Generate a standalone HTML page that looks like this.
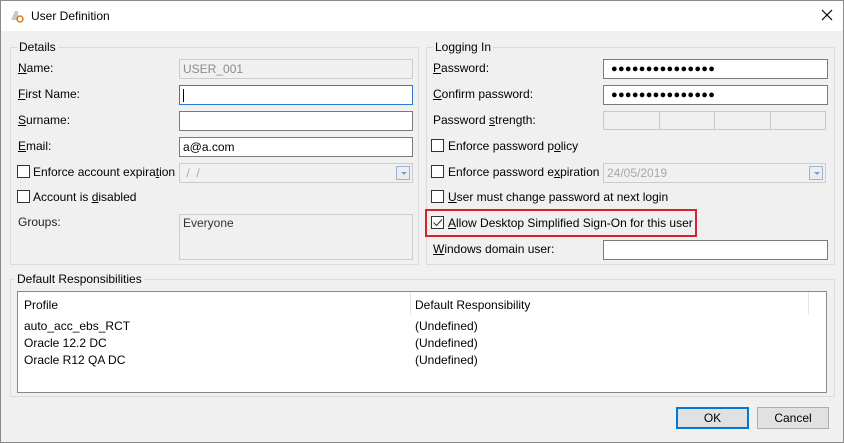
<!DOCTYPE html>
<html><head><style>
*{box-sizing:border-box;margin:0;padding:0}
body{width:844px;height:443px;overflow:hidden;background:#f0f0f0;font-family:"Liberation Sans",sans-serif;font-size:12px;color:#000;position:relative}
.win{position:absolute;left:0;top:0;width:844px;height:443px;border:1px solid #8a8a8a}
.title{position:absolute;left:1px;top:1px;width:842px;height:30px;background:#fff}
.a{position:absolute;white-space:nowrap}
.grp{position:absolute;border:1px solid #dcdcdc}
.lg{position:absolute;background:#f0f0f0;padding:0 2px;top:-8px;left:6px;line-height:14px}
.in{position:absolute;background:#fff;border:1px solid #7a7a7a;height:20px;padding:2px 3px;line-height:14px}
.dis{background:#f0f0f0;border-color:#cccccc;color:#8d8d8d}
.cb{position:absolute;width:13px;height:13px;border:1px solid #333;background:#fff}
.dd{position:absolute;right:2px;top:2px;width:14px;height:14px;border:1px solid #9fb4cc;background:#e9eef5}
.dd:after{content:"";position:absolute;left:4px;top:5px;border-left:3px solid transparent;border-right:3px solid transparent;border-top:3px solid #8a9bb0}
.dots{font-size:11px;font-weight:bold;line-height:12px;letter-spacing:0.3px;padding-left:7px}
.btn{position:absolute;height:22px;border:1px solid #adadad;background:#e1e1e1;text-align:center;line-height:20px}
u{text-decoration:underline}
</style></head><body>
<div class="win"></div>
<div class="title"></div>
<svg class="a" style="left:9px;top:9px" width="16" height="14" viewBox="0 0 16 14"><path d="M2 11 L6 2 L9 2 L9 11 Z" fill="#c8c8c8"/><circle cx="11" cy="10" r="3" fill="none" stroke="#e07b20" stroke-width="1.5"/></svg>
<div class="a" style="left:31px;top:9px;font-size:12px">User Definition</div>
<svg class="a" style="left:821px;top:9px" width="12" height="12"><path d="M1 1L11 11M11 1L1 11" stroke="#000" stroke-width="1.2"/></svg>

<div class="grp" style="left:10px;top:47px;width:409px;height:218px"><div class="lg">Details</div></div>
<div class="grp" style="left:426px;top:47px;width:409px;height:218px"><div class="lg">Logging In</div></div>
<div class="grp" style="left:10px;top:279px;width:825px;height:118px"><div class="lg" style="left:4px">Default Responsibilities</div></div>

<div class="a" style="left:18px;top:61px"><u>N</u>ame:</div>
<div class="in dis" style="left:179px;top:59px;width:234px">USER_001</div>
<div class="a" style="left:18px;top:87px"><u>F</u>irst Name:</div>
<div class="in" style="left:179px;top:85px;width:234px;border-color:#2c7bd0"><span style="display:inline-block;width:1px;height:13px;background:#000;margin-top:1px"></span></div>
<div class="a" style="left:18px;top:113px"><u>S</u>urname:</div>
<div class="in" style="left:179px;top:111px;width:234px"></div>
<div class="a" style="left:18px;top:139px"><u>E</u>mail:</div>
<div class="in" style="left:179px;top:137px;width:234px">a@a.com</div>
<div class="cb" style="left:17px;top:165px"></div>
<div class="a" style="left:33px;top:165px">Enforce account expira<u>t</u>ion</div>
<div class="in dis" style="left:179px;top:163px;width:234px;color:#aaa">&nbsp;/&nbsp;&nbsp;/<div class="dd"></div></div>
<div class="cb" style="left:17px;top:190px"></div>
<div class="a" style="left:33px;top:190px">Account is <u>d</u>isabled</div>
<div class="a" style="left:18px;top:215px;color:#222">Groups:</div>
<div class="in dis" style="left:179px;top:214px;width:234px;height:46px;color:#333;padding-top:1px">Everyone</div>

<div class="a" style="left:433px;top:61px"><u>P</u>assword:</div>
<div class="in dots" style="left:603px;top:59px;width:225px;padding-top:3px">●●●●●●●●●●●●●●●</div>
<div class="a" style="left:433px;top:87px"><u>C</u>onfirm password:</div>
<div class="in dots" style="left:603px;top:85px;width:225px;padding-top:3px">●●●●●●●●●●●●●●●</div>
<div class="a" style="left:433px;top:113px">Password <u>s</u>trength:</div>
<div class="a" style="left:603px;top:111px;width:223px;height:19px;border:1px solid #c8c8c8;display:flex">
<div style="flex:1;border-right:1px solid #c8c8c8"></div><div style="flex:1;border-right:1px solid #c8c8c8"></div><div style="flex:1;border-right:1px solid #c8c8c8"></div><div style="flex:1"></div></div>
<div class="cb" style="left:431px;top:139px"></div>
<div class="a" style="left:448px;top:139px">Enforce password p<u>o</u>licy</div>
<div class="cb" style="left:431px;top:165px"></div>
<div class="a" style="left:448px;top:165px">Enforce password e<u>x</u>piration</div>
<div class="in dis" style="left:603px;top:163px;width:223px;color:#a8a8a8">24/05/2019<div class="dd"></div></div>
<div class="cb" style="left:431px;top:190px"></div>
<div class="a" style="left:448px;top:190px"><u>U</u>ser must change password at next login</div>
<div class="a" style="left:425px;top:209px;width:272px;height:28px;border:2px solid #d9202f"></div>
<div class="cb" style="left:431px;top:216px"><svg width="11" height="11" style="position:absolute;left:0;top:0"><path d="M1.5 5.5L4.5 8.5L10 2.5" stroke="#333" fill="none" stroke-width="1.1"/></svg></div>
<div class="a" style="left:448px;top:216px"><u>A</u>llow Desktop Simplified Sign-On for this user</div>
<div class="a" style="left:433px;top:242px"><u>W</u>indows domain user:</div>
<div class="in" style="left:603px;top:240px;width:225px"></div>

<div class="a" style="left:17px;top:291px;width:810px;height:102px;background:#fff;border:1px solid #828790"></div>
<div class="a" style="left:410px;top:292px;width:1px;height:23px;background:#e5e5e5"></div>
<div class="a" style="left:808px;top:292px;width:1px;height:23px;background:#e5e5e5"></div>
<div class="a" style="left:24px;top:298px">Profile</div>
<div class="a" style="left:415px;top:298px">Default Responsibility</div>
<div class="a" style="left:24px;top:319px">auto_acc_ebs_RCT</div>
<div class="a" style="left:415px;top:319px">(Undefined)</div>
<div class="a" style="left:24px;top:336px">Oracle 12.2 DC</div>
<div class="a" style="left:415px;top:336px">(Undefined)</div>
<div class="a" style="left:24px;top:353px">Oracle R12 QA DC</div>
<div class="a" style="left:415px;top:353px">(Undefined)</div>

<div class="btn" style="left:676px;top:407px;width:73px;border:2px solid #0078d7;line-height:18px">OK</div>
<div class="btn" style="left:757px;top:407px;width:72px">Cancel</div>
</body></html>
